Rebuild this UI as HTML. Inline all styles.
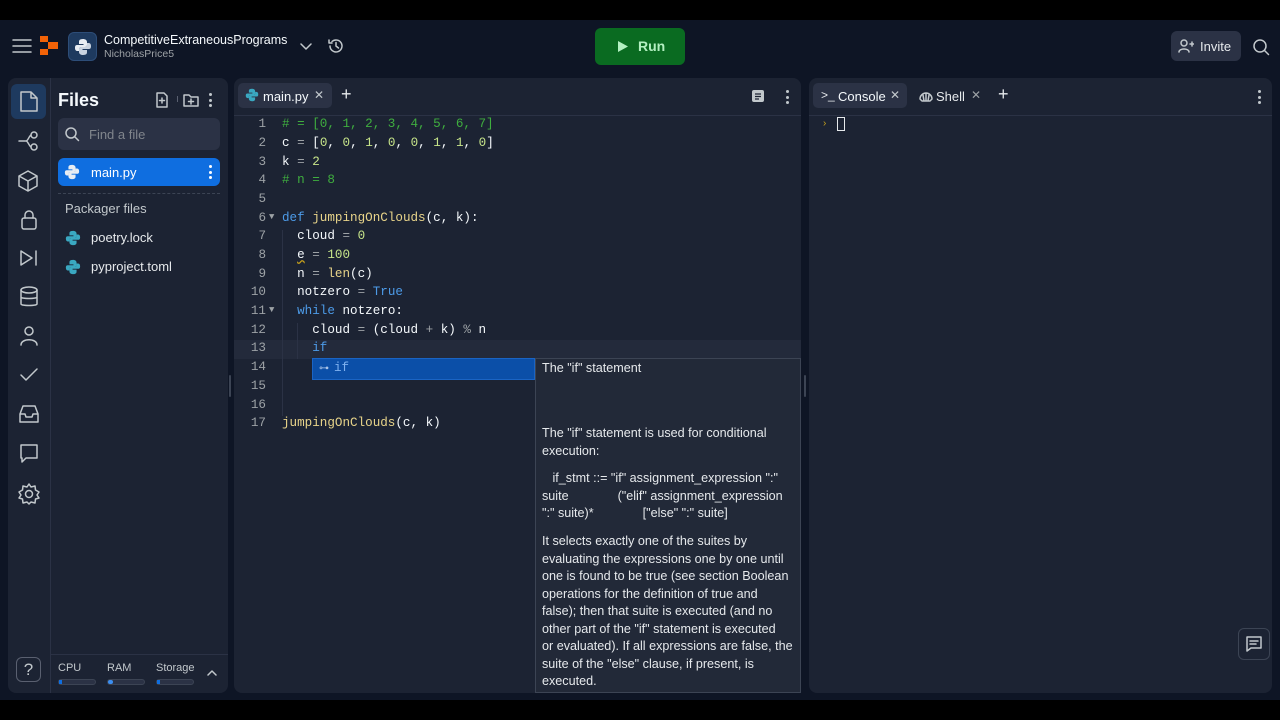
<!DOCTYPE html>
<html><head><meta charset="utf-8"><style>
*{margin:0;padding:0;box-sizing:border-box}
body{width:1280px;height:720px;background:#000;position:relative;overflow:hidden;font-family:"Liberation Sans",sans-serif;color:#f5f9fc}
.a{position:absolute}
.app{position:absolute;left:0;top:20px;width:1280px;height:680px;background:#0e1525}
.panel{position:absolute;background:#1c2333;border-radius:8px}
.mono{font-family:"Liberation Mono","DejaVu Sans Mono",monospace;font-size:12.6px}
.ln{position:absolute;left:234px;width:32px;text-align:right;color:#9da2a6}
.cl{position:absolute;left:282px;white-space:pre;color:#f5f9fc}
.cm{color:#3fae3f}.nm{color:#c7e58a}.kw{color:#4d9be8}.fn{color:#e8d48a}.op{color:#9da2a6}
.ic{stroke:#c2c8cc;fill:none;stroke-width:1.5;stroke-linecap:round;stroke-linejoin:round}
.doc{position:absolute;left:542px;font-size:12.6px;color:#e6e9ec;white-space:pre;line-height:17.5px}
.dots{position:absolute;width:4px}
.dots i{display:block;width:3px;height:3px;border-radius:50%;background:#c2c8cc;margin-bottom:2.5px}
</style></head><body>
<div class="app">
 <svg class="a" style="left:12px;top:19px" width="20" height="14"><path d="M1 1H19M1 7H19M1 13H19" class="ic" stroke="#e6e9ec"/></svg>
 <svg class="a" style="left:40px;top:16px" width="20" height="20"><rect x="0" y="0" width="8" height="6" fill="#f26207"/><rect x="8" y="6" width="10" height="7" fill="#f26207"/><rect x="0" y="13" width="8" height="6" fill="#f26207"/></svg>
 <div class="a" style="left:68px;top:12px;width:29px;height:29px;border-radius:6px;background:#1e3a5f;border:1px solid #2d4d78"></div>
 <svg class="a" style="left:74px;top:18px" width="18" height="18" viewBox="0 0 18 18"><path d="M9 1C5 1 5 3 5 4V6H9.5V7H3C1 7 1 9 1 10C1 12 2 13 3.5 13H5V11C5 10 6 9 7 9H11C12 9 13 8 13 7V4C13 2 11 1 9 1Z" fill="#e8edf3"/><path d="M9 17C13 17 13 15 13 14V12H8.5V11H15C17 11 17 9 17 8C17 6 16 5 14.5 5H13V7C13 8 12 9 11 9H7C6 9 5 10 5 11V14C5 16 7 17 9 17Z" fill="#c9d3e0"/></svg>
 <div class="a" style="left:104px;top:13px;font-size:12.5px;color:#f5f9fc">CompetitiveExtraneousPrograms</div>
 <div class="a" style="left:104px;top:28px;font-size:10.5px;color:#9da2a6">NicholasPrice5</div>
 <svg class="a" style="left:300px;top:23px" width="12" height="8"><path d="M1 1L6 6L11 1" class="ic"/></svg>
 <svg class="a" style="left:327px;top:17px" width="18" height="18"><path d="M3 9A6 6 0 1 0 5 4.5M2 3V6H5M9 5.5V9L11.5 11" class="ic"/></svg>
 <div class="a" style="left:595px;top:8px;width:90px;height:37px;border-radius:6px;background:#0a6b21"></div>
 <svg class="a" style="left:617px;top:20px" width="12" height="13"><path d="M1 1L11 6.5L1 12Z" fill="#b3f0c1"/></svg>
 <div class="a" style="left:638px;top:18px;font-size:14px;font-weight:bold;color:#b3f0c1">Run</div>
 <div class="a" style="left:1171px;top:11px;width:70px;height:30px;border-radius:6px;background:#2b3245"></div>
 <svg class="a" style="left:1178px;top:18px" width="16" height="16"><circle cx="6" cy="5" r="3" class="ic"/><path d="M1 14C1 10 11 10 11 14M12 6H16M14 4V8" class="ic"/></svg>
 <div class="a" style="left:1200px;top:19px;font-size:13px;color:#e6e9ec">Invite</div>
 <svg class="a" style="left:1252px;top:18px" width="18" height="18"><circle cx="8" cy="8" r="6" class="ic" stroke="#e6e9ec"/><path d="M12.5 12.5L16.5 16.5" class="ic" stroke="#e6e9ec"/></svg>

 <div class="panel" style="left:8px;top:58px;width:220px;height:615px"></div>
 <div class="a" style="left:50px;top:58px;width:1px;height:615px;background:#2b3245"></div>
 <div class="a" style="left:11px;top:64px;width:35px;height:35px;border-radius:6px;background:#1e3a5f"></div>
 <svg class="a" style="left:19px;top:71px" width="20" height="22"><path d="M2 1H12L18 7V20H2Z M12 1V7H18" class="ic" stroke="#9fc7f5"/></svg>
 <svg class="a" style="left:18px;top:111px" width="22" height="20"><circle cx="16" cy="4" r="3" class="ic"/><circle cx="16" cy="16" r="3" class="ic"/><path d="M1 10H8M8 10C10 10 11 5 13 4M8 10C10 10 11 15 13 16" class="ic"/></svg>
 <svg class="a" style="left:18px;top:150px" width="20" height="22"><path d="M10 1L19 6V16L10 21L1 16V6Z M1 6L10 11L19 6M10 11V21" class="ic"/></svg>
 <svg class="a" style="left:20px;top:189px" width="18" height="22"><rect x="2" y="9" width="14" height="11" rx="2" class="ic"/><path d="M5 9V6A4 4 0 0 1 13 6V9" class="ic"/></svg>
 <svg class="a" style="left:19px;top:229px" width="20" height="18"><path d="M2 2L13 9L2 16Z M17 2V16" class="ic"/></svg>
 <svg class="a" style="left:19px;top:266px" width="20" height="22"><ellipse cx="10" cy="4" rx="8" ry="3" class="ic"/><path d="M2 4V18C2 20 18 20 18 18V4M2 11C2 13 18 13 18 11" class="ic"/></svg>
 <svg class="a" style="left:19px;top:306px" width="20" height="20"><circle cx="10" cy="5" r="4" class="ic"/><path d="M2 19C2 12 18 12 18 19" class="ic"/></svg>
 <svg class="a" style="left:19px;top:347px" width="20" height="16"><path d="M2 8L7 13L18 2" class="ic"/></svg>
 <svg class="a" style="left:18px;top:384px" width="22" height="20"><path d="M2 10L5 2H17L20 10V18H2Z M2 10H7L8 13H14L15 10H20" class="ic"/></svg>
 <svg class="a" style="left:19px;top:423px" width="20" height="22"><path d="M2 2H18V15H7L3 19V15H2Z" class="ic"/></svg>
 <svg class="a" style="left:17px;top:462px" width="24" height="24"><circle cx="12" cy="12" r="3.5" class="ic"/><path d="M12 2L14 5L18 4L18.5 8L22 10L20 13L22 16L18.5 17L18 21L14 20L12 22L10 20L6 21L5.5 17L2 16L4 13L2 10L5.5 8L6 4L10 5Z" class="ic"/></svg>
 <div class="a" style="left:16px;top:637px;width:25px;height:25px;border:1px solid #5a6070;border-radius:6px;text-align:center;font-size:17px;line-height:23px;color:#c2c8cc">?</div>

 <div class="a" style="left:58px;top:70px;font-size:18px;font-weight:bold">Files</div>
 <svg class="a" style="left:155px;top:72px" width="14" height="16"><path d="M2 1H9L12 4V15H2Z M7 6V11M4.5 8.5H9.5" class="ic"/></svg>
 <div class="a" style="left:177px;top:76px;width:1px;height:6px;background:#5a6070"></div>
 <svg class="a" style="left:183px;top:73px" width="16" height="14"><path d="M1 2H6L8 4H15V13H1Z M8 6V11M5.5 8.5H10.5" class="ic"/></svg>
 <div class="dots" style="left:209px;top:73px"><i></i><i></i><i></i></div>
 <div class="a" style="left:58px;top:98px;width:162px;height:32px;border-radius:6px;background:#2b3245"></div>
 <svg class="a" style="left:64px;top:106px" width="16" height="16"><circle cx="7" cy="7" r="5" class="ic" stroke="#9da2a6"/><path d="M11 11L14.5 14.5" class="ic" stroke="#9da2a6"/></svg>
 <div class="a" style="left:89px;top:107px;font-size:13px;color:#80858c">Find a file</div>
 <div class="a" style="left:58px;top:138px;width:162px;height:28px;border-radius:6px;background:#0f6ee0"></div>
 <svg class="a" style="left:64px;top:144px" width="16" height="16" viewBox="0 0 18 18"><path d="M9 1C5 1 5 3 5 4V6H9.5V7H3C1 7 1 9 1 10C1 12 2 13 3.5 13H5V11C5 10 6 9 7 9H11C12 9 13 8 13 7V4C13 2 11 1 9 1Z" fill="#e8edf3"/><path d="M9 17C13 17 13 15 13 14V12H8.5V11H15C17 11 17 9 17 8C17 6 16 5 14.5 5H13V7C13 8 12 9 11 9H7C6 9 5 10 5 11V14C5 16 7 17 9 17Z" fill="#e8edf3"/></svg>
 <div class="a" style="left:91px;top:145px;font-size:13px;color:#fff">main.py</div>
 <div class="dots" style="left:209px;top:145px"><i style="background:#fff"></i><i style="background:#fff"></i><i style="background:#fff"></i></div>
 <div class="a" style="left:58px;top:173px;width:162px;border-top:1px dashed #3c4454"></div>
 <div class="a" style="left:65px;top:181px;font-size:13px;color:#c2c8cc">Packager files</div>
 <svg class="a" style="left:65px;top:210px" width="16" height="16" viewBox="0 0 18 18"><path d="M9 1C5 1 5 3 5 4V6H9.5V7H3C1 7 1 9 1 10C1 12 2 13 3.5 13H5V11C5 10 6 9 7 9H11C12 9 13 8 13 7V4C13 2 11 1 9 1Z" fill="#3aa8c1"/><path d="M9 17C13 17 13 15 13 14V12H8.5V11H15C17 11 17 9 17 8C17 6 16 5 14.5 5H13V7C13 8 12 9 11 9H7C6 9 5 10 5 11V14C5 16 7 17 9 17Z" fill="#3aa8c1"/></svg>
 <div class="a" style="left:91px;top:210px;font-size:13px;color:#e6e9ec">poetry.lock</div>
 <svg class="a" style="left:65px;top:239px" width="16" height="16" viewBox="0 0 18 18"><path d="M9 1C5 1 5 3 5 4V6H9.5V7H3C1 7 1 9 1 10C1 12 2 13 3.5 13H5V11C5 10 6 9 7 9H11C12 9 13 8 13 7V4C13 2 11 1 9 1Z" fill="#3aa8c1"/><path d="M9 17C13 17 13 15 13 14V12H8.5V11H15C17 11 17 9 17 8C17 6 16 5 14.5 5H13V7C13 8 12 9 11 9H7C6 9 5 10 5 11V14C5 16 7 17 9 17Z" fill="#3aa8c1"/></svg>
 <div class="a" style="left:91px;top:239px;font-size:13px;color:#e6e9ec">pyproject.toml</div>
 <div class="a" style="left:50px;top:634px;width:178px;height:1px;background:#2b3245"></div>
 <div class="a" style="left:58px;top:642px;font-size:11px;color:#c2c8cc">CPU</div>
 <div class="a" style="left:156px;top:642px;font-size:11px;color:#c2c8cc">Storage</div>
 <div class="a" style="left:107px;top:642px;font-size:11px;color:#c2c8cc">RAM</div>
 <div class="a" style="left:58px;top:659px;width:38px;height:6px;border-radius:3px;background:#2b3245;border:1px solid #3c4454"><div style="width:3px;height:4px;background:#0f6ee0"></div></div>
 <div class="a" style="left:107px;top:659px;width:38px;height:6px;border-radius:3px;background:#2b3245;border:1px solid #3c4454"><div style="width:5px;height:4px;background:#3b8ef0;border-radius:2px"></div></div>
 <div class="a" style="left:156px;top:659px;width:38px;height:6px;border-radius:3px;background:#2b3245;border:1px solid #3c4454"><div style="width:3px;height:4px;background:#0f6ee0"></div></div>
 <svg class="a" style="left:207px;top:650px" width="10" height="6"><path d="M1 5L5 1L9 5" class="ic" stroke="#e6e9ec"/></svg>

 <div class="panel" style="left:234px;top:58px;width:567px;height:615px"></div>
 <div class="a" style="left:234px;top:95px;width:567px;height:1px;background:#2b3245"></div>
 <div class="a" style="left:238px;top:63px;width:94px;height:25px;border-radius:5px;background:#2b3245"></div>
 <svg class="a" style="left:245px;top:68px" width="14" height="14" viewBox="0 0 18 18"><path d="M9 1C5 1 5 3 5 4V6H9.5V7H3C1 7 1 9 1 10C1 12 2 13 3.5 13H5V11C5 10 6 9 7 9H11C12 9 13 8 13 7V4C13 2 11 1 9 1Z" fill="#3aa8c1"/><path d="M9 17C13 17 13 15 13 14V12H8.5V11H15C17 11 17 9 17 8C17 6 16 5 14.5 5H13V7C13 8 12 9 11 9H7C6 9 5 10 5 11V14C5 16 7 17 9 17Z" fill="#3aa8c1"/></svg>
 <div class="a" style="left:263px;top:69px;font-size:13px">main.py</div>
 <div class="a" style="left:314px;top:68px;font-size:12px;color:#c2c8cc">✕</div>
 <div class="a" style="left:341px;top:64px;font-size:18px;color:#e6e9ec">+</div>
 <svg class="a" style="left:751px;top:69px" width="14" height="14"><rect x="1" y="1" width="12" height="12" rx="2" fill="#c2c8cc"/><path d="M4 5H10M4 7.5H10M4 10H8" stroke="#1c2333" stroke-width="1.2"/></svg>
 <div class="dots" style="left:786px;top:70px"><i></i><i></i><i></i></div>

 <div class="mono">
 <div class="ln" style="top:97px">1</div><div class="cl" style="top:97px"><span class="cm"># = [0, 1, 2, 3, 4, 5, 6, 7]</span></div>
 <div class="ln" style="top:116px">2</div><div class="cl" style="top:116px">c <span class="op">=</span> [<span class="nm">0</span>, <span class="nm">0</span>, <span class="nm">1</span>, <span class="nm">0</span>, <span class="nm">0</span>, <span class="nm">1</span>, <span class="nm">1</span>, <span class="nm">0</span>]</div>
 <div class="ln" style="top:135px">3</div><div class="cl" style="top:135px">k <span class="op">=</span> <span class="nm">2</span></div>
 <div class="ln" style="top:153px">4</div><div class="cl" style="top:153px"><span class="cm"># n = 8</span></div>
 <div class="ln" style="top:172px">5</div>
 <div class="ln" style="top:191px">6</div><div class="a op" style="left:269px;top:192px;font-size:9px">▼</div><div class="cl" style="top:191px"><span class="kw">def</span> <span class="fn">jumpingOnClouds</span>(c, k):</div>
 <div class="ln" style="top:209px">7</div><div class="cl" style="top:209px">  cloud <span class="op">=</span> <span class="nm">0</span></div>
 <div class="ln" style="top:228px">8</div><div class="cl" style="top:228px">  <span style="text-decoration:underline wavy #c9a21a">e</span> <span class="op">=</span> <span class="nm">100</span></div>
 <div class="ln" style="top:247px">9</div><div class="cl" style="top:247px">  n <span class="op">=</span> <span class="fn">len</span>(c)</div>
 <div class="ln" style="top:265px">10</div><div class="cl" style="top:265px">  notzero <span class="op">=</span> <span class="kw">True</span></div>
 <div class="ln" style="top:284px">11</div><div class="a op" style="left:269px;top:285px;font-size:9px">▼</div><div class="cl" style="top:284px">  <span class="kw">while</span> notzero:</div>
 <div class="ln" style="top:303px">12</div><div class="cl" style="top:303px">    cloud <span class="op">=</span> (cloud <span class="op">+</span> k) <span class="op">%</span> n</div>
 <div class="a" style="left:234px;top:320px;width:567px;height:19px;background:#232a3b"></div>
 <div class="ln" style="top:321px">13</div><div class="cl" style="top:321px">    <span class="kw">if</span></div>
 <div class="ln" style="top:340px">14</div>
 <div class="ln" style="top:359px">15</div>
 <div class="ln" style="top:378px">16</div>
 <div class="ln" style="top:396px">17</div><div class="cl" style="top:396px"><span class="fn">jumpingOnClouds</span>(c, k)</div>
 </div>
 <div class="a" style="left:282px;top:210px;width:1px;height:186px;background:#2b3245"></div>
 <div class="a" style="left:297px;top:303px;width:1px;height:36px;background:#2b3245"></div>

 <div class="a" style="left:312px;top:338px;width:223px;height:22px;background:#0b4fa8;border:1px solid #1a64c4"></div>
 <div class="a" style="left:319px;top:343px;font-size:10px;color:#a9c4e8">⊶</div>
 <div class="a mono" style="left:334px;top:341px;color:#7fb2f0">if</div>
 <div class="a" style="left:535px;top:338px;width:266px;height:335px;background:#222938;border:1px solid #3c4454"></div>
 <div class="doc" style="top:340px">The "if" statement</div>
 <div class="doc" style="top:405px">The "if" statement is used for conditional
execution:</div>
 <div class="doc" style="top:450px">   if_stmt ::= "if" assignment_expression ":"
suite              ("elif" assignment_expression
":" suite)*              ["else" ":" suite]</div>
 <div class="doc" style="top:513px">It selects exactly one of the suites by
evaluating the expressions one by one until
one is found to be true (see section Boolean
operations for the definition of true and
false); then that suite is executed (and no
other part of the "if" statement is executed
or evaluated). If all expressions are false, the
suite of the "else" clause, if present, is
executed.</div>

 <div class="a" style="left:229px;top:355px;width:2px;height:22px;background:#3c4454;border-radius:1px"></div>
 <div class="a" style="left:804px;top:355px;width:2px;height:22px;background:#3c4454;border-radius:1px"></div>

 <div class="panel" style="left:809px;top:58px;width:463px;height:615px"></div>
 <div class="a" style="left:809px;top:95px;width:463px;height:1px;background:#2b3245"></div>
 <div class="a" style="left:813px;top:63px;width:94px;height:25px;border-radius:5px;background:#2b3245"></div>
 <div class="a" style="left:821px;top:68px;font-size:12px;color:#e6e9ec">&gt;_</div>
 <div class="a" style="left:838px;top:69px;font-size:13px">Console</div>
 <div class="a" style="left:890px;top:68px;font-size:12px;color:#c2c8cc">✕</div>
 <svg class="a" style="left:919px;top:69px" width="14" height="13"><path d="M1 10A6 6 0 0 1 13 10L11 12H3Z M7 4V12M4 6L5 12M10 6L9 12" class="ic" stroke="#9da2a6" stroke-width="1"/></svg>
 <div class="a" style="left:936px;top:69px;font-size:13px;color:#e6e9ec">Shell</div>
 <div class="a" style="left:971px;top:68px;font-size:12px;color:#9da2a6">✕</div>
 <div class="a" style="left:998px;top:64px;font-size:18px;color:#e6e9ec">+</div>
 <div class="dots" style="left:1258px;top:70px"><i></i><i></i><i></i></div>
 <div class="a" style="left:823px;top:98px;font-size:10px;color:#c9a21a">›</div>
 <div class="a" style="left:837px;top:97px;width:8px;height:14px;border:1.5px solid #e6e9ec"></div>
 <div class="a" style="left:1238px;top:608px;width:32px;height:32px;border-radius:6px;background:#1c2333;border:1px solid #3c4454"></div>
 <svg class="a" style="left:1245px;top:615px" width="18" height="18"><path d="M2 2H16V13H6L2 16Z M5 6H13M5 9H11" class="ic" stroke="#e6e9ec"/></svg>
</div>
</body></html>
